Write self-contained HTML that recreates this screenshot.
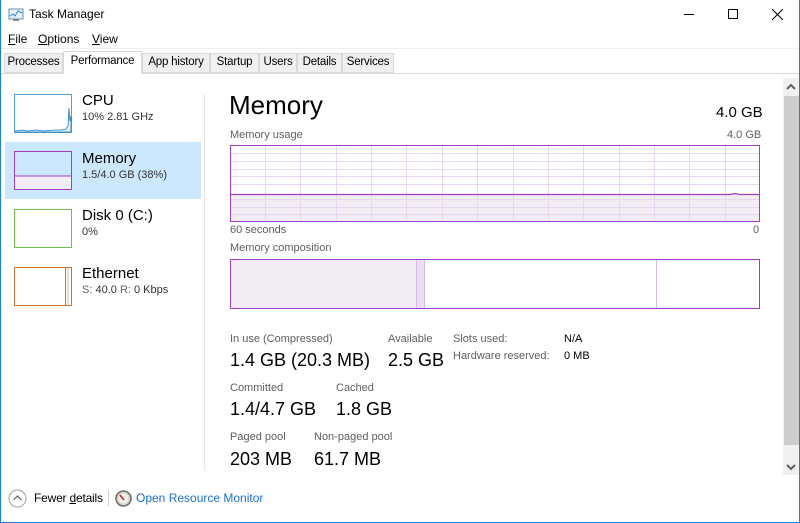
<!DOCTYPE html>
<html><head><meta charset="utf-8"><style>
*{margin:0;padding:0;box-sizing:border-box}
body{width:800px;height:523px;overflow:hidden;background:#fff;font-family:"Segoe UI","Liberation Sans",sans-serif;color:#000;position:relative}
.a{position:absolute;white-space:nowrap}
.win{position:absolute;left:0;top:0;width:800px;height:523px;border:1px solid #1883d7;border-top:none}
.tab{position:absolute;top:53px;height:20px;border:1px solid #d9d9d9;background:#f0f0f0;font-size:11.5px;padding:2px 0 0 0;color:#000;white-space:nowrap;text-align:center;letter-spacing:-0.2px}
.lbl{font-size:11px;color:#5f5f5f}
.big{font-size:18px;color:#000}
</style></head><body>
<div class="win"></div>
<svg class="a" style="left:8px;top:8px" width="16" height="14"><rect x="1" y="1" width="14" height="10" fill="#e8f1f8" stroke="#6b8ca8"/><polyline points="2,8 5,6 7,8 10,3 14,5" fill="none" stroke="#2a8ad4"/><rect x="5" y="11" width="6" height="2" fill="#7a8a99"/></svg>
<div class="a" style="left:29px;top:7px;font-size:12px">Task Manager</div>
<div class="a" style="left:684px;top:14px;width:10px;height:1px;background:#000"></div>
<div class="a" style="left:728px;top:9px;width:10px;height:10px;border:1px solid #000"></div>
<svg class="a" style="left:772px;top:9px" width="11" height="11"><path d="M0 0L11 11M11 0L0 11" stroke="#000" stroke-width="1"/></svg>
<div class="a" style="left:8px;top:32px;font-size:12px"><u>F</u>ile</div>
<div class="a" style="left:38px;top:32px;font-size:12px"><u>O</u>ptions</div>
<div class="a" style="left:92px;top:32px;font-size:12px"><u>V</u>iew</div>
<div class="a" style="left:1px;top:48px;width:798px;height:1px;background:#f0f0f0"></div>
<div class="tab" style="left:4px;width:59px">Processes</div>
<div class="tab" style="left:63px;top:51px;height:23px;width:79px;background:#fff;border-bottom:none;padding-top:3px">Performance</div>
<div class="tab" style="left:142px;width:68px">App history</div>
<div class="tab" style="left:210px;width:49px">Startup</div>
<div class="tab" style="left:259px;width:38px">Users</div>
<div class="tab" style="left:297px;width:45px">Details</div>
<div class="tab" style="left:342px;width:52px">Services</div>
<div class="a" style="left:1px;top:73px;width:798px;height:1px;background:#d9d9d9"></div>
<div class="a" style="left:64px;top:73px;width:77px;height:1px;background:#fff"></div>
<div class="a" style="left:5px;top:142px;width:196px;height:57px;background:#cce8ff"></div>
<svg class="a" style="left:14px;top:94px" width="58" height="40"><rect x="0.5" y="0.5" width="57" height="38" fill="#fff" stroke="#4fa1d8"/><polyline points="1,37 8,36 14,37 22,36 30,37 40,36 48,36 52,35 54,32 55,14 56,27 57,22 57,38 1,38" fill="#e3f0f9" stroke="#1a7dc4" stroke-width="0.8"/></svg>
<div class="a" style="left:82px;top:92px;font-size:15px">CPU</div>
<div class="a" style="left:82px;top:111px;font-size:11px;color:#333">10% 2.81 GHz</div>
<svg class="a" style="left:14px;top:151px" width="58" height="40"><rect x="0.5" y="25" width="57" height="13" fill="#f1edf2"/><rect x="0.5" y="0.5" width="57" height="38" fill="none" stroke="#a43ec9"/><line x1="0" y1="25" x2="58" y2="25" stroke="#a43ec9"/></svg>
<div class="a" style="left:82px;top:150px;font-size:15px">Memory</div>
<div class="a" style="left:82px;top:169px;font-size:11px;color:#333">1.5/4.0 GB (38%)</div>
<svg class="a" style="left:14px;top:209px" width="58" height="40"><rect x="0.5" y="0.5" width="57" height="38" fill="#fff" stroke="#6cc04a"/></svg>
<div class="a" style="left:82px;top:207px;font-size:15px">Disk 0 (C:)</div>
<div class="a" style="left:82px;top:226px;font-size:11px;color:#333">0%</div>
<svg class="a" style="left:14px;top:267px" width="58" height="40"><rect x="0.5" y="0.5" width="57" height="38" fill="#fff" stroke="#c9742a"/><line x1="51.5" y1="1" x2="51.5" y2="38" stroke="#c9742a"/><line x1="54" y1="1" x2="54" y2="38" stroke="#e8b88f"/></svg>
<div class="a" style="left:82px;top:265px;font-size:15px">Ethernet</div>
<div class="a" style="left:82px;top:284px;font-size:11px;color:#333"><span style="color:#666">S:</span> 40.0 <span style="color:#666">R:</span> 0 Kbps</div>
<div class="a" style="left:204px;top:94px;width:1px;height:376px;background:#e5e5e5"></div>
<div class="a" style="left:229px;top:90px;font-size:26px">Memory</div>
<div class="a" style="left:716px;top:104px;font-size:15px">4.0 GB</div>
<div class="a lbl" style="left:230px;top:129px">Memory usage</div>
<div class="a lbl" style="left:727px;top:129px">4.0 GB</div>
<svg class="a" style="left:230px;top:145px" width="530" height="77">
<rect x="0" y="49" width="530" height="28" fill="#f1edf2"/>
<g stroke="#e9d6f0" stroke-width="1">
<line x1="0" y1="8.5" x2="530" y2="8.5"/><line x1="0" y1="16.5" x2="530" y2="16.5"/><line x1="0" y1="24.5" x2="530" y2="24.5"/><line x1="0" y1="31.5" x2="530" y2="31.5"/><line x1="0" y1="39.5" x2="530" y2="39.5"/><line x1="0" y1="54.5" x2="530" y2="54.5"/><line x1="0" y1="62.5" x2="530" y2="62.5"/><line x1="0" y1="69.5" x2="530" y2="69.5"/>
<line x1="35.5" y1="0" x2="35.5" y2="77"/><line x1="70.5" y1="0" x2="70.5" y2="77"/><line x1="106.5" y1="0" x2="106.5" y2="77"/><line x1="141.5" y1="0" x2="141.5" y2="77"/><line x1="176.5" y1="0" x2="176.5" y2="77"/><line x1="212.5" y1="0" x2="212.5" y2="77"/><line x1="247.5" y1="0" x2="247.5" y2="77"/><line x1="283.5" y1="0" x2="283.5" y2="77"/><line x1="318.5" y1="0" x2="318.5" y2="77"/><line x1="353.5" y1="0" x2="353.5" y2="77"/><line x1="389.5" y1="0" x2="389.5" y2="77"/><line x1="424.5" y1="0" x2="424.5" y2="77"/><line x1="459.5" y1="0" x2="459.5" y2="77"/><line x1="495.5" y1="0" x2="495.5" y2="77"/>
</g>
<polyline points="0,49.5 500,49.5 505,48.5 510,49.5 530,49.5" fill="none" stroke="#a43ec9" stroke-width="1.2"/>
<rect x="0.5" y="0.5" width="529" height="76" fill="none" stroke="#a43ec9"/>
</svg>
<div class="a lbl" style="left:230px;top:224px">60 seconds</div>
<div class="a lbl" style="left:753px;top:224px">0</div>
<div class="a lbl" style="left:230px;top:242px">Memory composition</div>
<svg class="a" style="left:230px;top:259px" width="530" height="50">
<rect x="0" y="0" width="186" height="50" fill="#f1edf2"/>
<rect x="186" y="0" width="9" height="50" fill="#eadff0"/>
<line x1="186.5" y1="0" x2="186.5" y2="50" stroke="#d6b8e2"/>
<line x1="194.5" y1="0" x2="194.5" y2="50" stroke="#d6b8e2"/>
<line x1="426.5" y1="0" x2="426.5" y2="50" stroke="#d6b8e2"/>
<rect x="0.5" y="0.5" width="529" height="49" fill="none" stroke="#a43ec9"/>
</svg>
<div class="a lbl" style="left:230px;top:333px">In use (Compressed)</div>
<div class="a big" style="left:230px;top:350px">1.4 GB (20.3 MB)</div>
<div class="a lbl" style="left:388px;top:333px">Available</div>
<div class="a big" style="left:388px;top:350px">2.5 GB</div>
<div class="a lbl" style="left:453px;top:333px">Slots used:</div>
<div class="a" style="left:564px;top:333px;font-size:11px">N/A</div>
<div class="a lbl" style="left:453px;top:350px">Hardware reserved:</div>
<div class="a" style="left:564px;top:350px;font-size:11px">0 MB</div>
<div class="a lbl" style="left:230px;top:382px">Committed</div>
<div class="a big" style="left:230px;top:399px">1.4/4.7 GB</div>
<div class="a lbl" style="left:336px;top:382px">Cached</div>
<div class="a big" style="left:336px;top:399px">1.8 GB</div>
<div class="a lbl" style="left:230px;top:431px">Paged pool</div>
<div class="a big" style="left:230px;top:449px">203 MB</div>
<div class="a lbl" style="left:314px;top:431px">Non-paged pool</div>
<div class="a big" style="left:314px;top:449px">61.7 MB</div>
<div class="a" style="left:783px;top:78px;width:16px;height:397px;background:#f0f0f0"></div>
<div class="a" style="left:784px;top:96px;width:15px;height:349px;background:#cdcdcd"></div>
<svg class="a" style="left:786px;top:83px" width="10" height="8"><path d="M1 6L5 2L9 6" fill="none" stroke="#606060" stroke-width="2"/></svg>
<svg class="a" style="left:786px;top:463px" width="10" height="8"><path d="M1 2L5 6L9 2" fill="none" stroke="#606060" stroke-width="2"/></svg>
<svg class="a" style="left:8px;top:489px" width="19" height="19"><circle cx="9.5" cy="9.5" r="8.5" fill="#fff" stroke="#a0a0a0"/><path d="M5.5 11L9.5 7L13.5 11" fill="none" stroke="#606060" stroke-width="1.2"/></svg>
<div class="a" style="left:34px;top:491px;font-size:12px;letter-spacing:-0.2px">Fewer <u>d</u>etails</div>
<div class="a" style="left:108px;top:490px;width:1px;height:16px;background:#ccc"></div>
<svg class="a" style="left:115px;top:490px" width="17" height="17"><circle cx="8.5" cy="8.5" r="7.5" fill="#d9d4cc" stroke="#6b6b6b" stroke-width="1.5"/><circle cx="8.5" cy="8.5" r="5" fill="#f4f1ea"/><path d="M5 5L9 10" stroke="#c8302a" stroke-width="1.8"/></svg>
<div class="a" style="left:136px;top:491px;font-size:12px;color:#1a6fd4">Open Resource Monitor</div>
</body></html>
